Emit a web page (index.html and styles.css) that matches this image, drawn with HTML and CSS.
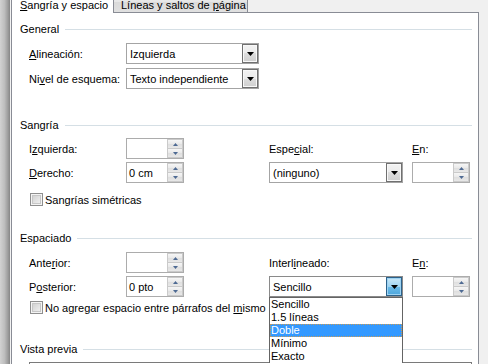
FILE: index.html
```html
<!DOCTYPE html>
<html lang="es">
<head>
<meta charset="utf-8">
<title>Párrafo</title>
<link rel="stylesheet" href="styles.css">
</head>
<body>
<div class="screen">
  <div class="edge"></div>
  <div class="dialog">
    <div class="tabs">
      <div class="tab active"><u>S</u>angría y espacio</div>
      <div class="tab">Líneas y saltos de <u>p</u>ágina</div>
    </div>
    <div class="panel">
      <div class="gh first">General</div>
      <div class="grid general">
        <div class="lbl"><u>A</u>lineación:</div>
        <div class="select"><span class="val">Izquierda</span><span class="btn"><svg width="7" height="4" viewBox="0 0 7 4"><polygon points="0,0 7,0 3.5,4" fill="#000"/></svg></span></div>
        <div class="lbl">Ni<u>v</u>el de esquema:</div>
        <div class="select"><span class="val">Texto independiente</span><span class="btn"><svg width="7" height="4" viewBox="0 0 7 4"><polygon points="0,0 7,0 3.5,4" fill="#000"/></svg></span></div>
      </div>

      <div class="gh sangria">Sangría</div>
      <div class="grid wide g-sangria">
        <div class="lbl">I<u>z</u>quierda:</div>
        <div class="spin"><span class="val"></span><span class="arrows"><span class="sb"><svg width="5" height="3" viewBox="0 0 5 3"><polygon points="2.5,0 5,3 0,3" fill="#4e6a93"/></svg></span><span class="sb"><svg width="5" height="3" viewBox="0 0 5 3"><polygon points="0,0 5,0 2.5,3" fill="#4e6a93"/></svg></span></span></div>
        <div></div>
        <div class="lbl">Espe<u>c</u>ial:</div>
        <div></div>
        <div class="lbl"><u>E</u>n:</div>

        <div class="lbl"><u>D</u>erecho:</div>
        <div class="spin"><span class="val">0 cm</span><span class="arrows"><span class="sb"><svg width="5" height="3" viewBox="0 0 5 3"><polygon points="2.5,0 5,3 0,3" fill="#4e6a93"/></svg></span><span class="sb"><svg width="5" height="3" viewBox="0 0 5 3"><polygon points="0,0 5,0 2.5,3" fill="#4e6a93"/></svg></span></span></div>
        <div></div>
        <div class="select"><span class="val">(ninguno)</span><span class="btn"><svg width="7" height="4" viewBox="0 0 7 4"><polygon points="0,0 7,0 3.5,4" fill="#000"/></svg></span></div>
        <div></div>
        <div class="spin"><span class="val"></span><span class="arrows"><span class="sb"><svg width="5" height="3" viewBox="0 0 5 3"><polygon points="2.5,0 5,3 0,3" fill="#4e6a93"/></svg></span><span class="sb"><svg width="5" height="3" viewBox="0 0 5 3"><polygon points="0,0 5,0 2.5,3" fill="#4e6a93"/></svg></span></span></div>
      </div>
      <div class="check c-sangria"><span class="cb"></span><span>San<u>g</u>rías simétricas</span></div>

      <div class="gh espaciado">Espaciado</div>
      <div class="grid wide g-espaciado">
        <div class="lbl">Ante<u>r</u>ior:</div>
        <div class="spin"><span class="val"></span><span class="arrows"><span class="sb"><svg width="5" height="3" viewBox="0 0 5 3"><polygon points="2.5,0 5,3 0,3" fill="#4e6a93"/></svg></span><span class="sb"><svg width="5" height="3" viewBox="0 0 5 3"><polygon points="0,0 5,0 2.5,3" fill="#4e6a93"/></svg></span></span></div>
        <div></div>
        <div class="lbl">Interl<u>i</u>neado:</div>
        <div></div>
        <div class="lbl">E<u>n</u>:</div>

        <div class="lbl">P<u>o</u>sterior:</div>
        <div class="spin"><span class="val">0 pto</span><span class="arrows"><span class="sb"><svg width="5" height="3" viewBox="0 0 5 3"><polygon points="2.5,0 5,3 0,3" fill="#4e6a93"/></svg></span><span class="sb"><svg width="5" height="3" viewBox="0 0 5 3"><polygon points="0,0 5,0 2.5,3" fill="#4e6a93"/></svg></span></span></div>
        <div></div>
        <div class="select open"><span class="val">Sencillo</span><span class="btn pressed"><svg width="7" height="4" viewBox="0 0 7 4"><polygon points="0,0 7,0 3.5,4" fill="#000"/></svg></span>
          <ul class="list">
            <li>Sencillo</li>
            <li>1.5 líneas</li>
            <li class="hl">Doble</li>
            <li>Mínimo</li>
            <li>Exacto</li>
          </ul>
        </div>
        <div></div>
        <div class="spin"><span class="val"></span><span class="arrows"><span class="sb"><svg width="5" height="3" viewBox="0 0 5 3"><polygon points="2.5,0 5,3 0,3" fill="#4e6a93"/></svg></span><span class="sb"><svg width="5" height="3" viewBox="0 0 5 3"><polygon points="0,0 5,0 2.5,3" fill="#4e6a93"/></svg></span></span></div>
      </div>
      <div class="check c-espaciado"><span class="cb"></span><span class="clip">No agregar espacio entre párrafos del <u>m</u>ismo estilo</span></div>

      <div class="gh vista">Vista previa</div>
      <div class="preview"></div>
    </div>
  </div>
  <div class="rightgap"></div>
</div>
</body>
</html>
```

FILE: styles.css
```css
html, body {
  margin: 0;
  padding: 0;
}
body {
  font-family: "Liberation Sans", Arial, sans-serif;
  font-size: 11px;
  color: #000;
  background: #f0f0f0;
}
.screen {
  display: flex;
  width: 488px;
  height: 364px;
  overflow: hidden;
  background: #f0f0f0;
}
.edge {
  flex: none;
  width: 10px;
  background: linear-gradient(90deg, #d2d2d2 0, #bdbdbd 45%, #9c9c9c 80%, #858585 100%);
  border-right: 1px solid #f2f2f2;
}
.dialog {
  flex: none;
  width: 468px;
  display: flex;
  flex-direction: column;
}
.rightgap {
  flex: 1;
}
.tabs {
  display: flex;
  align-items: flex-start;
  height: 21px;
  margin-top: -9px;
}
.tab {
  box-sizing: border-box;
  height: 21px;
  padding: 7px 0 0 7px;
  line-height: 13px;
  white-space: nowrap;
  border: 1px solid #898c95;
  border-bottom: none;
  background: linear-gradient(#f2f2f2, #e6e6e6 50%, #dadada 50%, #e0e0e0);
}
.tab.active {
  position: relative;
  z-index: 1;
  width: 103px;
  height: 22px;
  padding-left: 8px;
  background: #fff;
}
.tab + .tab {
  width: 134px;
  border-left: none;
}
.panel {
  flex: 1;
  background: #fff;
  border: 1px solid #898c95;
  border-bottom: none;
  padding: 0 6px 0 8px;
}
.gh {
  display: flex;
  align-items: center;
  height: 14px;
  line-height: 14px;
  white-space: nowrap;
}
.gh::after {
  content: "";
  flex: 1;
  height: 1px;
  margin-left: 6px;
  background: #d5dfe5;
}
.gh.first { margin-top: 9px; }
.gh.sangria { margin-top: 29px; }
.gh.espaciado { margin-top: 25px; }
.gh.vista { margin-top: 28px; }

.grid {
  display: grid;
  grid-auto-rows: 21px;
  align-items: center;
  margin-left: 9px;
}
.general {
  grid-template-columns: 97px 133px;
  row-gap: 4px;
  margin-top: 7px;
}
.wide {
  grid-template-columns: 97px 58px 85px 134px 9px 58px;
  row-gap: 3px;
}
.g-sangria { margin-top: 6px; }
.g-espaciado { margin-top: 7px; }
.lbl {
  white-space: nowrap;
}
.select {
  position: relative;
  box-sizing: border-box;
  display: flex;
  align-items: stretch;
  height: 21px;
  border: 1px solid #a4a4a4;
  background: #fff;
}
.val {
  flex: 1;
  display: flex;
  align-items: center;
  padding-left: 3px;
  white-space: nowrap;
  overflow: hidden;
}
.btn {
  flex: none;
  box-sizing: border-box;
  width: 16px;
  display: flex;
  align-items: center;
  justify-content: center;
  border: 1px solid #707070;
  box-shadow: inset 0 0 0 1px #f8f8f8;
  background: linear-gradient(#f2f2f2, #ebebeb 50%, #dddddd 50%, #cfcfcf);
}
.btn.pressed {
  border-color: #2c628b;
  box-shadow: inset 0 0 0 1px #9ed3f2;
  background: linear-gradient(#cbe8f8, #9fd4f1 50%, #6bbbe8 50%, #4ea6dc);
}
.select.open {
  border-color: #8a8a8a;
}
.spin {
  box-sizing: border-box;
  display: flex;
  height: 21px;
  border: 1px solid #acacac;
  background: #fff;
}
.spin .val {
  padding-left: 2px;
}
.arrows {
  flex: none;
  width: 16px;
  display: flex;
  flex-direction: column;
}
.sb {
  flex: 1;
  box-sizing: border-box;
  display: flex;
  align-items: center;
  justify-content: center;
  border: 1px solid #cacaca;
  background: linear-gradient(#f6f6f6, #e9e9e9 50%, #dedede 50%, #e8e8e8);
}
.sb + .sb {
  border-top: none;
}
.check {
  display: flex;
  align-items: center;
  gap: 2px;
  height: 13px;
  margin-left: 10px;
  white-space: nowrap;
}
.c-sangria { margin-top: 10px; }
.c-espaciado { margin-top: 4px; }
.clip {
  width: 223px;
  overflow: hidden;
}
.cb {
  flex: none;
  box-sizing: border-box;
  width: 13px;
  height: 13px;
  border: 1px solid #8f8f8f;
  box-shadow: inset 0 0 0 1px #f4f4f4, inset 0 0 0 2px #c7c7c7;
  background: linear-gradient(135deg, #cbcbcb, #f7f7f7);
}
.list {
  position: absolute;
  z-index: 5;
  top: calc(100% + 1px);
  left: -1px;
  width: 134px;
  box-sizing: border-box;
  margin: 0;
  padding: 0;
  list-style: none;
  background: #fff;
  border: 1px solid #646464;
  border-bottom: none;
}
.list li {
  height: 13px;
  line-height: 13px;
  padding-left: 1px;
  white-space: nowrap;
}
.list li.hl {
  background: #3399ff;
  color: #fff;
  outline: 1px dotted #c99a55;
  outline-offset: -1px;
}
.preview {
  margin: 6px 0 0 9px;
  width: 441px;
  height: 40px;
  border: 1px solid #7a7a7a;
}
```
